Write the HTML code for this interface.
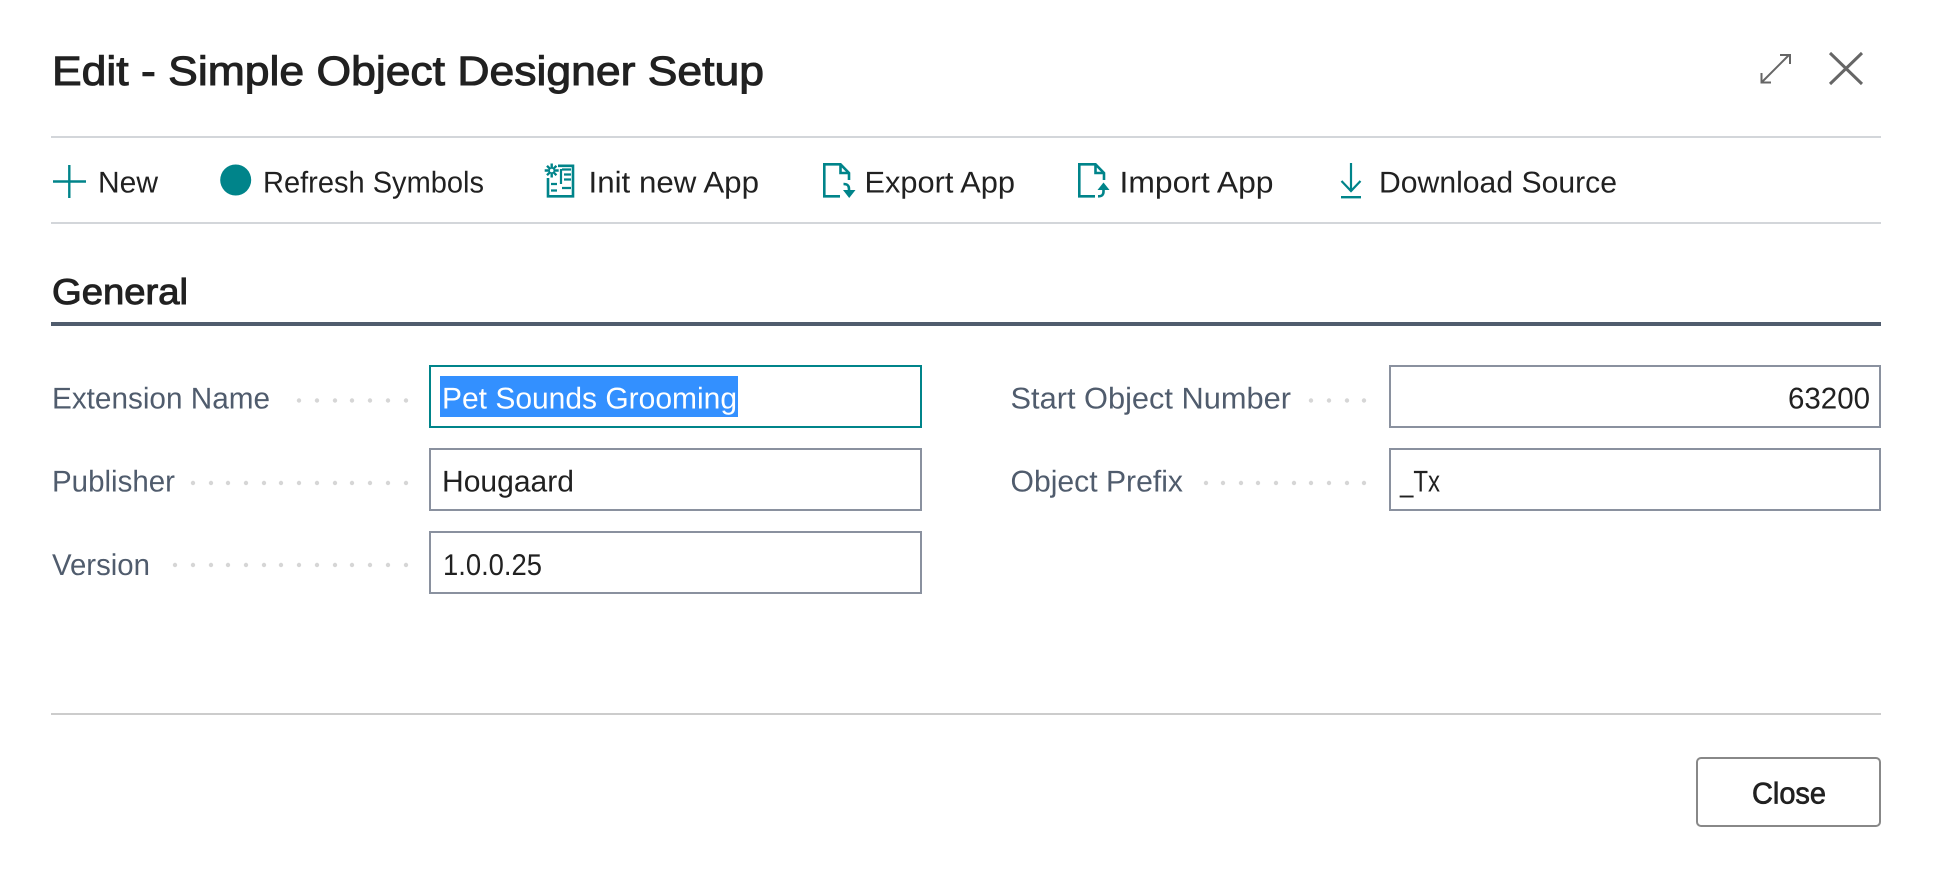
<!DOCTYPE html>
<html lang="en">
<head>
<meta charset="utf-8">
<title>Edit - Simple Object Designer Setup</title>
<style>
html,body{margin:0;padding:0;background:#fff;width:1934px;height:877px;overflow:hidden}
svg{display:block}
text{font-family:"Liberation Sans",sans-serif;text-rendering:geometricPrecision}
.t{font-size:30px;fill:#212121}
.l{font-size:30px;fill:#505c6d}
.v{font-size:30px;fill:#212121}
.s{fill:#212121;stroke:#212121;stroke-width:1px}
.d{fill:#d6d6d6}
.ic{fill:none;stroke:#00848a;stroke-width:2}
</style>
</head>
<body>
<svg width="1934" height="877" viewBox="0 0 1934 877" xmlns="http://www.w3.org/2000/svg">
<rect width="1934" height="877" fill="#fff"/>

<text x="52" y="85" class="s" font-size="41" textLength="712" lengthAdjust="spacingAndGlyphs">Edit - Simple Object Designer Setup</text>

<g fill="none" stroke="#666">
<path d="M1762 82L1789 55M1780 55H1790V64M1761.500 73V82.500H1771" stroke-width="2"/>
<path d="M1830 53L1862 84M1862 53L1830 84" stroke-width="3"/>
</g>

<rect x="51" y="136" width="1830" height="2" fill="#d3d6da"/>
<rect x="51" y="222" width="1830" height="2" fill="#d3d6da"/>

<!-- New -->
<path fill="none" stroke="#00848a" stroke-width="2.400" d="M53 181.500H86M69.300 165V198"/>
<text x="98" y="192.500" class="t" textLength="60" lengthAdjust="spacingAndGlyphs">New</text>

<!-- Refresh -->
<circle cx="235.700" cy="180" r="15.500" fill="#00848a"/>
<text x="263" y="192.500" class="t" textLength="221" lengthAdjust="spacingAndGlyphs">Refresh Symbols</text>

<!-- Init new App -->
<path fill="none" stroke="#00848a" stroke-width="2.600" d="M558 165.800H573V196.300H548V178"/>
<path fill="none" stroke="#00848a" stroke-width="2.200" d="M562 169.500H571M564 174.500H571M564 179.500H571M562 188H571M551 184H557M551 190.500H557M561 169V184"/>
<path stroke="#00848a" stroke-width="2.400" fill="none" d="M551.700 163.500V177.500M544.700 170.500H558.700M547 165.800L556.400 175.200M556.400 165.800L547 175.200"/>
<circle cx="551.700" cy="170.500" r="1.800" fill="#fff"/>
<text x="588.500" y="192.500" class="t" textLength="170.500" lengthAdjust="spacingAndGlyphs">Init new App</text>

<!-- Export -->
<path fill="none" stroke="#00848a" stroke-width="2.600" d="M840 196.300H824.300V164.300H840.500L849 173V180M840.500 164.300V173H849"/>
<path fill="none" stroke="#00848a" stroke-width="2.600" d="M843.500 184C847.500 184 849 185.500 849 189V192"/>
<path fill="#00848a" d="M843 190H855.500L849.200 198Z"/>
<text x="864.500" y="192.500" class="t" textLength="150.500" lengthAdjust="spacingAndGlyphs">Export App</text>

<!-- Import -->
<path fill="none" stroke="#00848a" stroke-width="2.600" d="M1095 196.300H1079.300V164.300H1095.500L1104 173V180M1095.500 164.300V173H1104"/>
<path fill="none" stroke="#00848a" stroke-width="2.600" d="M1098 196.300C1102 196.300 1103.500 195 1103.500 191.500V188"/>
<path fill="#00848a" d="M1097.500 190H1109.500L1103.500 182.500Z"/>
<text x="1119.500" y="192.500" class="t" textLength="154" lengthAdjust="spacingAndGlyphs">Import App</text>

<!-- Download -->
<path fill="none" stroke="#00848a" stroke-width="2.200" d="M1351 163V191M1341.500 181L1351 191L1360.500 181"/>
<rect x="1341" y="196" width="20" height="2.400" fill="#00848a"/>
<text x="1379" y="192.500" class="t" textLength="238" lengthAdjust="spacingAndGlyphs">Download Source</text>

<!-- General -->
<text x="52" y="304" class="s" font-size="36" textLength="136" lengthAdjust="spacingAndGlyphs">General</text>
<rect x="51" y="322" width="1830" height="4" fill="#505c6d"/>

<!-- Left labels -->
<text x="52" y="408.500" class="l" textLength="218" lengthAdjust="spacingAndGlyphs">Extension Name</text>
<g class="d">
<circle cx="299" cy="400.500" r="2.200"/><circle cx="317" cy="400.500" r="2.200"/><circle cx="335" cy="400.500" r="2.200"/><circle cx="352" cy="400.500" r="2.200"/><circle cx="370" cy="400.500" r="2.200"/><circle cx="388" cy="400.500" r="2.200"/><circle cx="406" cy="400.500" r="2.200"/>
</g>
<text x="52" y="491.500" class="l" textLength="123" lengthAdjust="spacingAndGlyphs">Publisher</text>
<g class="d">
<circle cx="193" cy="483" r="2.200"/><circle cx="211" cy="483" r="2.200"/><circle cx="228" cy="483" r="2.200"/><circle cx="246" cy="483" r="2.200"/><circle cx="264" cy="483" r="2.200"/><circle cx="281" cy="483" r="2.200"/><circle cx="299" cy="483" r="2.200"/><circle cx="317" cy="483" r="2.200"/><circle cx="335" cy="483" r="2.200"/><circle cx="352" cy="483" r="2.200"/><circle cx="370" cy="483" r="2.200"/><circle cx="388" cy="483" r="2.200"/><circle cx="406" cy="483" r="2.200"/>
</g>
<text x="52" y="575" class="l" textLength="98" lengthAdjust="spacingAndGlyphs">Version</text>
<g class="d">
<circle cx="175" cy="565" r="2.200"/><circle cx="193" cy="565" r="2.200"/><circle cx="211" cy="565" r="2.200"/><circle cx="228" cy="565" r="2.200"/><circle cx="246" cy="565" r="2.200"/><circle cx="264" cy="565" r="2.200"/><circle cx="281" cy="565" r="2.200"/><circle cx="299" cy="565" r="2.200"/><circle cx="317" cy="565" r="2.200"/><circle cx="335" cy="565" r="2.200"/><circle cx="352" cy="565" r="2.200"/><circle cx="370" cy="565" r="2.200"/><circle cx="388" cy="565" r="2.200"/><circle cx="406" cy="565" r="2.200"/>
</g>

<!-- Left inputs -->
<rect x="430" y="366" width="491" height="61" fill="#fff" stroke="#00848a" stroke-width="2"/>
<rect x="440" y="376" width="298" height="41" fill="#3390ff"/>
<text x="442" y="408.500" font-size="30" fill="#fff" textLength="295" lengthAdjust="spacingAndGlyphs">Pet Sounds Grooming</text>
<rect x="430" y="449" width="491" height="61" fill="#fff" stroke="#8a919f" stroke-width="2"/>
<text x="442" y="491.500" class="v" textLength="132" lengthAdjust="spacingAndGlyphs">Hougaard</text>
<rect x="430" y="532" width="491" height="61" fill="#fff" stroke="#8a919f" stroke-width="2"/>
<text x="443" y="575" class="v" textLength="99" lengthAdjust="spacingAndGlyphs">1.0.0.25</text>

<!-- Right labels -->
<text x="1010.500" y="408.500" class="l" textLength="280.500" lengthAdjust="spacingAndGlyphs">Start Object Number</text>
<g class="d">
<circle cx="1311" cy="400.500" r="2.200"/><circle cx="1329" cy="400.500" r="2.200"/><circle cx="1347" cy="400.500" r="2.200"/><circle cx="1364" cy="400.500" r="2.200"/>
</g>
<text x="1010.500" y="491.500" class="l" textLength="172.500" lengthAdjust="spacingAndGlyphs">Object Prefix</text>
<g class="d">
<circle cx="1206" cy="483" r="2.200"/><circle cx="1223" cy="483" r="2.200"/><circle cx="1241" cy="483" r="2.200"/><circle cx="1258" cy="483" r="2.200"/><circle cx="1276" cy="483" r="2.200"/><circle cx="1294" cy="483" r="2.200"/><circle cx="1311" cy="483" r="2.200"/><circle cx="1329" cy="483" r="2.200"/><circle cx="1347" cy="483" r="2.200"/><circle cx="1364" cy="483" r="2.200"/>
</g>

<!-- Right inputs -->
<rect x="1390" y="366" width="490" height="61" fill="#fff" stroke="#8a919f" stroke-width="2"/>
<text x="1788" y="408.500" class="v" textLength="82" lengthAdjust="spacingAndGlyphs">63200</text>
<rect x="1390" y="449" width="490" height="61" fill="#fff" stroke="#8a919f" stroke-width="2"/>
<text x="1400" y="491.500" class="v" textLength="40" lengthAdjust="spacingAndGlyphs">_Tx</text>

<!-- Footer -->
<rect x="51" y="713" width="1830" height="2" fill="#cccccc"/>
<rect x="1697" y="758" width="183" height="68" rx="4" fill="#fff" stroke="#888" stroke-width="2"/>
<text x="1752" y="803.500" class="s" style="stroke-width:.7px" font-size="30" textLength="74" lengthAdjust="spacingAndGlyphs">Close</text>
</svg>
</body>
</html>
